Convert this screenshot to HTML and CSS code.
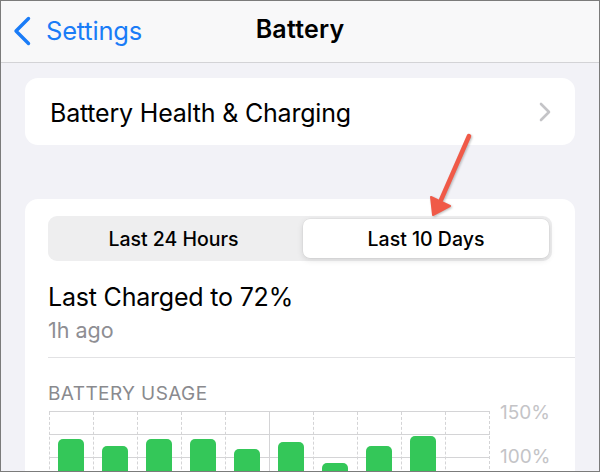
FILE: index.html
```html
<!DOCTYPE html>
<html lang="en">
<head>
    <meta charset="UTF-8">
    <meta name="viewport" content="width=device-width, initial-scale=1.0">
    <title>Battery</title>
    <link rel="stylesheet" href="styles.css">
</head>
<body>
    <div class="screen">
        <header class="navbar">
            <a class="back" href="#">
                <svg class="back-chevron" width="20" height="32" viewBox="0 0 20 32">
                    <polyline points="15.5,2.5 3,15 15.5,27.5" fill="none" stroke="#1a7cf7" stroke-width="3.4" stroke-linecap="round" stroke-linejoin="round"/>
                </svg>
                <span>Settings</span>
            </a>
            <h1 class="nav-title">Battery</h1>
            <span></span>
        </header>

        <main class="content">
            <section class="card row-card">
                <span class="row-label">Battery Health &amp; Charging</span>
                <svg class="row-chevron" width="12" height="20" viewBox="0 0 12 20">
                    <polyline points="2,2 10,10 2,18" fill="none" stroke="#c4c4c7" stroke-width="2.6" stroke-linecap="round" stroke-linejoin="round"/>
                </svg>
            </section>

            <section class="card usage-card">
                <div class="segmented">
                    <button class="segment">Last 24 Hours</button>
                    <button class="segment active">Last 10 Days</button>
                </div>

                <div class="charged">
                    <p class="charged-title">Last Charged to 72%</p>
                    <p class="charged-sub">1h ago</p>
                </div>

                <div class="divider"></div>

                <h2 class="section-label">BATTERY USAGE</h2>

                <div class="chart">
                    <div class="plot">
                        <div class="col"><div class="bar" style="height: 65px"></div></div>
                        <div class="col"><div class="bar" style="height: 58px"></div></div>
                        <div class="col"><div class="bar" style="height: 65px"></div></div>
                        <div class="col"><div class="bar" style="height: 65px"></div></div>
                        <div class="col"><div class="bar" style="height: 55px"></div></div>
                        <div class="col mid"><div class="bar" style="height: 62px"></div></div>
                        <div class="col"><div class="bar" style="height: 41px"></div></div>
                        <div class="col"><div class="bar" style="height: 58px"></div></div>
                        <div class="col"><div class="bar" style="height: 68px"></div></div>
                        <div class="col"></div>
                    </div>
                    <div class="axis">
                        <span>150%</span>
                        <span>100%</span>
                    </div>
                </div>
            </section>
        </main>

        <!-- red callout arrow pointing at the selected segment -->
        <svg class="callout" width="600" height="472" viewBox="0 0 600 472">
            <g fill="#f05a48" stroke="#f05a48" stroke-linecap="round" stroke-linejoin="round">
                <line x1="469" y1="136" x2="441" y2="200" stroke-width="4.5"/>
                <polygon points="433,215 431,197 450,206" stroke-width="2"/>
            </g>
        </svg>
    </div>
</body>
</html>
```

FILE: styles.css
```css
body {
    margin: 0;
    padding: 0;
    font-family: 'Inter', 'Noto Sans', sans-serif;
    color: #000;
}

.screen {
    position: relative;
    width: 600px;
    height: 472px;
    box-sizing: border-box;
    border: 1px solid #7b7b7b;
    background: #f2f2f7;
    overflow: hidden;
}

/* nav bar */

.navbar {
    display: grid;
    grid-template-columns: 1fr auto 1fr;
    align-items: start;
    box-sizing: border-box;
    height: 62px;
    padding-top: 13px;
    background: #f8f8f9;
    border-bottom: 1px solid #d3d3d6;
}

.back {
    display: flex;
    align-items: center;
    gap: 13px;
    padding-left: 12px;
    color: #1a7cf7;
    text-decoration: none;
    font-size: 25.5px;
    line-height: 30px;
    letter-spacing: -0.2px;
}

.back-chevron {
    margin-top: 2px;
}

.nav-title {
    margin: 0;
    font-size: 25px;
    font-weight: 600;
    line-height: 30px;
    letter-spacing: 0.2px;
}

/* cards */

.content {
    padding: 15px 24px 0;
}

.card {
    background: #fff;
    border-radius: 13px;
}

.row-card {
    display: flex;
    align-items: center;
    justify-content: space-between;
    height: 67px;
    padding: 0 24px 0 25px;
}

.row-label {
    margin-top: 3px;
    font-size: 25px;
    line-height: 30px;
    letter-spacing: -0.2px;
}

.usage-card {
    margin-top: 54px;
    padding: 17px 0 40px 23px;
}

/* segmented control */

.segmented {
    display: flex;
    width: 498px;
    padding: 3px;
    background: #eeeeef;
    border-radius: 9px;
}

.segment {
    flex: 1;
    height: 39px;
    border: none;
    background: transparent;
    border-radius: 7px;
    font-family: inherit;
    font-size: 19.5px;
    font-weight: 500;
    color: #000;
}

.segment.active {
    flex: none;
    width: 246px;
    margin-left: 7px;
    background: #fff;
    box-shadow: 0 2px 6px rgba(0, 0, 0, 0.12), 0 0 0 0.5px rgba(0, 0, 0, 0.06);
}

/* last charged */

.charged {
    padding-top: 21px;
}

.charged-title {
    margin: 0;
    font-size: 25px;
    letter-spacing: -0.2px;
    line-height: 30px;
}

.charged-sub {
    margin: 5px 0 0;
    font-size: 21.5px;
    color: #8e8e93;
    line-height: 26px;
}

.divider {
    height: 1px;
    margin-top: 14px;
    background: #e2e2e4;
}

.section-label {
    margin: 25px 0 0;
    font-size: 19px;
    font-weight: 400;
    color: #8a8a8e;
    letter-spacing: 0.4px;
    line-height: 22px;
}

/* chart */

.chart {
    display: flex;
    margin: 6px 0 0 1px;
}

.plot {
    display: flex;
    align-items: flex-end;
    height: 92px;
    border-top: 1px solid #d4d4d6;
    border-right: 1px dashed #d4d4d6;
    background-image: repeating-linear-gradient(to bottom, transparent 0, transparent 22px, #d4d4d6 22px, #d4d4d6 23px);
}

.col {
    display: flex;
    align-items: flex-end;
    width: 43px;
    height: 100%;
    border-left: 1px dashed #d4d4d6;
}

.col.mid {
    border-left-style: solid;
}

.bar {
    width: 26px;
    margin-left: 8px;
    background: #34c759;
    border-radius: 5px 5px 0 0;
}

.axis {
    display: flex;
    flex-direction: column;
    gap: 22px;
    padding-left: 10px;
    margin-top: -9px;
    font-size: 19px;
    line-height: 22px;
    color: #c4c4c7;
}

/* annotation */

.callout {
    position: absolute;
    top: -1px;
    left: -1px;
    pointer-events: none;
    filter: drop-shadow(1px 1px 1px rgba(0, 0, 0, 0.25));
}
```
